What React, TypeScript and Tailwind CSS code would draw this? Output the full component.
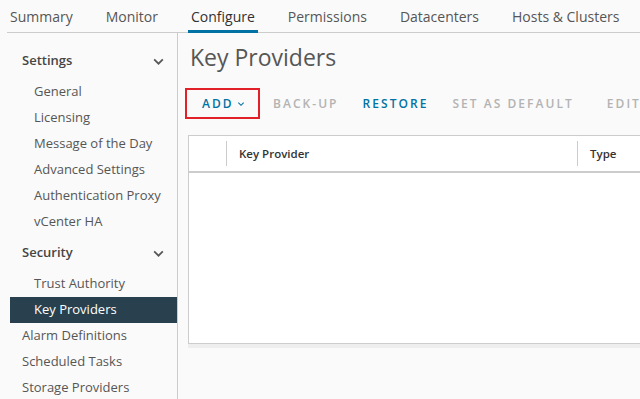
import React from 'react';

const tabs = ['Summary', 'Monitor', 'Configure', 'Permissions', 'Datacenters', 'Hosts & Clusters'];

type NavItem = { label: string; kind: 'group' | 'sub' | 'top'; active?: boolean };

const nav: NavItem[] = [
  { label: 'Settings', kind: 'group' },
  { label: 'General', kind: 'sub' },
  { label: 'Licensing', kind: 'sub' },
  { label: 'Message of the Day', kind: 'sub' },
  { label: 'Advanced Settings', kind: 'sub' },
  { label: 'Authentication Proxy', kind: 'sub' },
  { label: 'vCenter HA', kind: 'sub' },
  { label: 'Security', kind: 'group' },
  { label: 'Trust Authority', kind: 'sub' },
  { label: 'Key Providers', kind: 'sub', active: true },
  { label: 'Alarm Definitions', kind: 'top' },
  { label: 'Scheduled Tasks', kind: 'top' },
  { label: 'Storage Providers', kind: 'top' },
];

const Chevron = ({ className }: { className?: string }) => (
  <svg viewBox="0 0 12 12" className={className} fill="none" stroke="currentColor" strokeWidth={1.6}>
    <path d="M2 4l4 4 4-4" />
  </svg>
);

const App: React.FC = () => {
  return (
    <div
      className="w-[640px] h-[399px] overflow-hidden bg-[#fafafa] text-[#565656] flex flex-col"
      style={{ fontFamily: '"Open Sans", "Noto Sans", sans-serif' }}
    >
      {/* tabs */}
      <div className="h-[33px] shrink-0 pl-[7px] flex items-end">
        <div className="flex-1 h-[33px] flex items-end gap-[27px] border-b border-[#cccccc] whitespace-nowrap">
          {tabs.map(t => (
            <div
              key={t}
              className={`shrink-0 px-[3px] pt-[7px] pb-[3px] text-[14px] leading-[20px] -mb-px border-b-[3px] ${t === 'Configure' ? 'border-[#0072a3] text-[#313131]' : 'border-transparent text-[#565656]'}`}
            >
              {t}
            </div>
          ))}
        </div>
      </div>

      <div className="flex flex-1 min-h-0">
        {/* sidebar */}
        <div className="w-[178px] shrink-0 pl-[10px] pt-[10px] border-r border-[#cccccc]">
          {nav.map(item =>
            item.kind === 'group' ? (
              <div key={item.label} className="h-[36px] pl-[12px] pr-[12px] flex items-center justify-between text-[13px] font-semibold text-[#454545]">
                <span>{item.label}</span>
                <Chevron className="w-[13px] h-[13px] text-[#565656]" />
              </div>
            ) : (
              <div
                key={item.label}
                className={`h-[26px] flex items-center text-[13px] whitespace-nowrap ${item.kind === 'sub' ? 'pl-[24px]' : 'pl-[12px]'} ${item.active ? 'bg-[#29414e] text-white' : 'text-[#565656]'}`}
              >
                {item.label}
              </div>
            )
          )}
        </div>

        {/* content */}
        <div className="flex-1 min-w-0 pl-[10px] pt-[9px]">
          <h1 className="pl-[2px] text-[23px] leading-[30px] text-[#565656]">Key Providers</h1>
          <div className="mt-[16px] flex items-center whitespace-nowrap text-[12px] font-semibold tracking-[0.17em]">
            <div className="shrink-0 -ml-[3px] h-[31px] w-[75px] border-2 border-[#e12028] flex items-center pl-[15px] gap-[3px] text-[#0072a3]">
              ADD
              <Chevron className="w-[8px] h-[8px]" />
            </div>
            <div className="shrink-0 ml-[13px] text-[#b3b3b3]">BACK-UP</div>
            <div className="shrink-0 ml-[24px] text-[#0072a3]">RESTORE</div>
            <div className="shrink-0 ml-[24px] text-[#b3b3b3]">SET AS DEFAULT</div>
            <div className="shrink-0 ml-[33px] text-[#b3b3b3]">EDIT</div>
          </div>

          {/* table */}
          <div className="mt-[16px] w-[480px]">
            <div className="h-[209px] bg-white border border-[#cccccc] border-r-0 flex flex-col">
              <div className="h-[37px] border-b-2 border-[#cccccc] flex items-center text-[11.5px] font-semibold text-[#333333]">
                <div className="w-[38px] h-[25px] border-r border-[#cccccc]" />
                <div className="w-[351px] h-[25px] pl-[12px] flex items-center border-r border-[#cccccc]">Key Provider</div>
                <div className="pl-[12px]">Type</div>
              </div>
            </div>
            <div className="h-[4px] bg-[#eeeeee]" />
          </div>
        </div>
      </div>
    </div>
  );
};

export default App;
